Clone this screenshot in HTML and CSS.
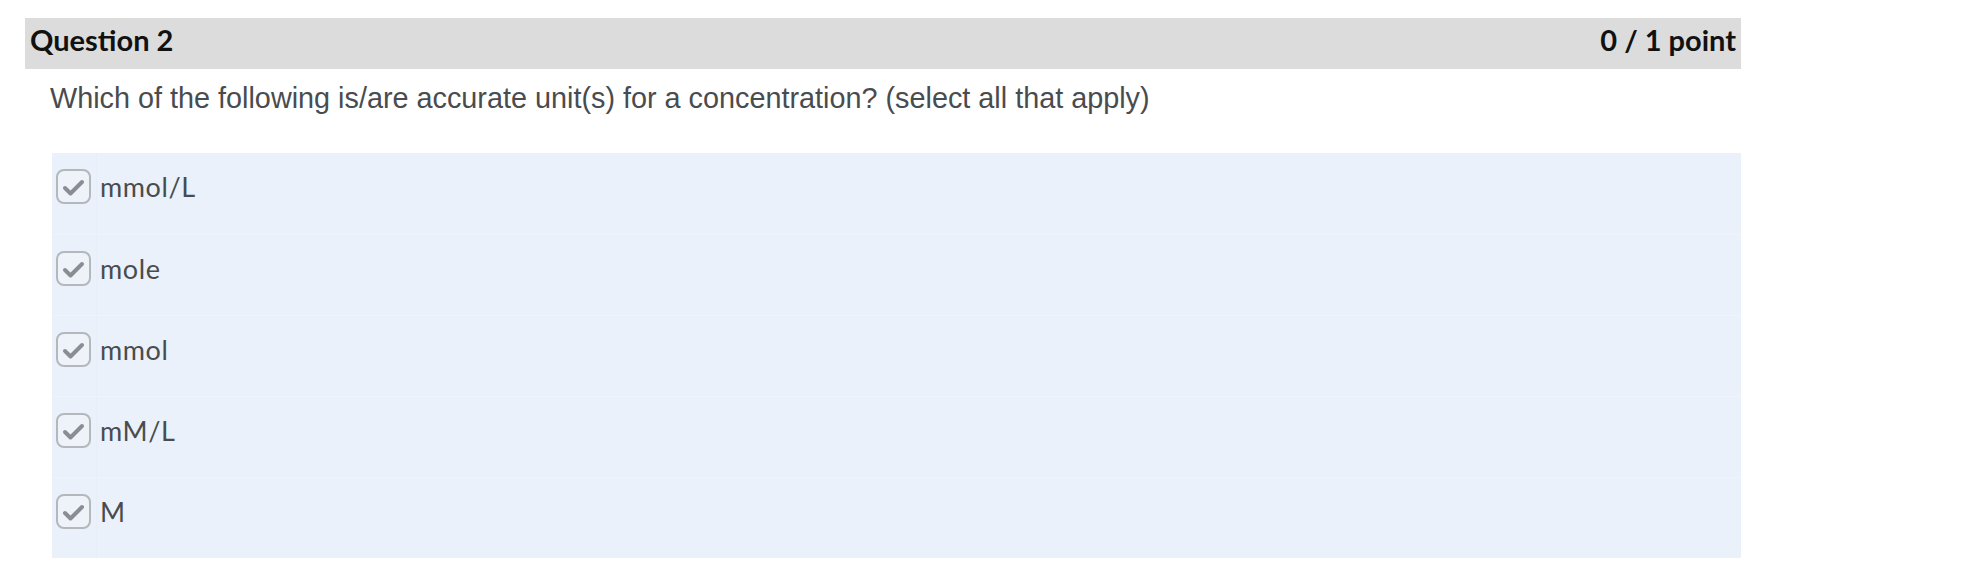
FILE: index.html
```html
<!DOCTYPE html>
<html lang="en">
<head>
<meta charset="utf-8">
<title>Question 2</title>
<link rel="stylesheet" href="styles.css">
</head>
<body>
<div class="page">
  <div class="q-header">
    <h2 class="q-title">Question 2</h2>
    <span class="q-score">0 / 1 point</span>
  </div>
  <p class="q-text">Which of the following is/are accurate unit(s) for a concentration? (select all that apply)</p>
  <div class="options">
    <div class="option">
      <div class="opt-check"><span class="cbox"><svg viewBox="0 0 31 31" class="tick"><polyline points="7,17 12.5,22.5 24,11"/></svg></span></div>
      <div class="opt-label">mmol/L</div>
    </div>
    <div class="option">
      <div class="opt-check"><span class="cbox"><svg viewBox="0 0 31 31" class="tick"><polyline points="7,17 12.5,22.5 24,11"/></svg></span></div>
      <div class="opt-label">mole</div>
    </div>
    <div class="option">
      <div class="opt-check"><span class="cbox"><svg viewBox="0 0 31 31" class="tick"><polyline points="7,17 12.5,22.5 24,11"/></svg></span></div>
      <div class="opt-label">mmol</div>
    </div>
    <div class="option">
      <div class="opt-check"><span class="cbox"><svg viewBox="0 0 31 31" class="tick"><polyline points="7,17 12.5,22.5 24,11"/></svg></span></div>
      <div class="opt-label">mM/L</div>
    </div>
    <div class="option">
      <div class="opt-check"><span class="cbox"><svg viewBox="0 0 31 31" class="tick"><polyline points="7,17 12.5,22.5 24,11"/></svg></span></div>
      <div class="opt-label">M</div>
    </div>
  </div>
</div>
</body>
</html>
```

FILE: styles.css
```css
html, body {
  margin: 0;
  padding: 0;
  background: #ffffff;
}

.page {
  width: 1716px;
  padding: 18px 0 0 25px;
}

.q-header {
  height: 51px;
  background: #dcdcdc;
  display: flex;
  justify-content: space-between;
  align-items: flex-start;
  padding: 4px 5px 0 5px;
  box-sizing: border-box;
}

.q-title,
.q-score {
  margin: 0;
  font-family: Lato, "Liberation Sans", sans-serif;
  font-weight: 700;
  font-size: 29px;
  color: #111111;
  line-height: 35px;
}

.q-text {
  margin: 13px 0 0 25px;
  font-family: "Liberation Sans", Arial, sans-serif;
  font-size: 28.8px;
  line-height: 32px;
  color: #494c4e;
}

.options {
  margin: 39px 0 0 27px;
  background: #eaf1fa;
}

.option {
  height: 81px;
  display: flex;
  align-items: flex-start;
  box-sizing: border-box;
}

.option + .option {
  border-top: 1px solid #eff4fb;
}

.opt-check {
  width: 45px;
  flex: none;
  padding: 16px 0 0 4px;
  box-sizing: border-box;
  align-self: stretch;
  border-right: 1px solid #e7eef8;
}

.cbox {
  display: block;
  width: 35px;
  height: 35px;
  box-sizing: border-box;
  border: 2px solid #b4b8bd;
  border-radius: 8px;
  background: #eef3fa;
}

.tick {
  display: block;
  width: 31px;
  height: 31px;
}

.tick polyline {
  fill: none;
  stroke: #8a8d91;
  stroke-width: 4;
  stroke-linecap: round;
  stroke-linejoin: round;
}

.opt-label {
  padding: 19px 0 0 3px;
  font-family: Lato, "Liberation Sans", sans-serif;
  font-size: 27px;
  letter-spacing: 0.6px;
  line-height: 30px;
  color: #494c4e;
}
```
